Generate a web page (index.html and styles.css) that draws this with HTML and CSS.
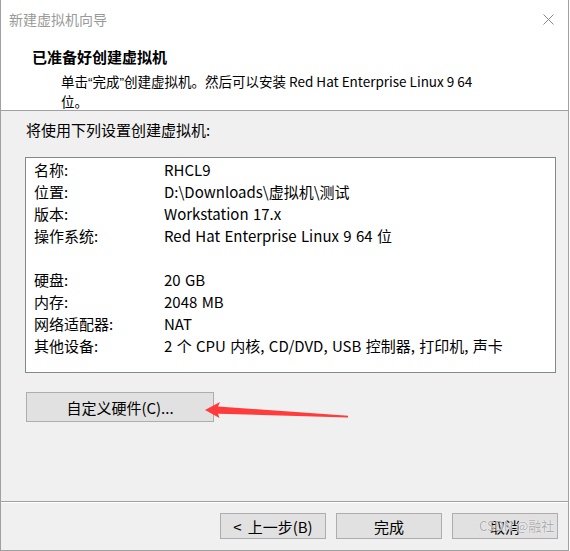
FILE: index.html
```html
<!DOCTYPE html>
<html lang="zh-CN">
<head>
<meta charset="utf-8">
<title>新建虚拟机向导</title>
<link rel="stylesheet" href="styles.css">
</head>
<body>
<div class="window">
  <div class="titlebar">
    <span class="title">新建虚拟机向导</span>
    <span class="close" aria-label="关闭">
      <svg width="11" height="11" viewBox="0 0 11 11"><path d="M0.5 0.5 L10.5 10.5 M10.5 0.5 L0.5 10.5" stroke="#8a8a8a" stroke-width="1" fill="none"/></svg>
    </span>
  </div>
  <div class="header">
    <div class="heading">已准备好创建虚拟机</div>
    <div class="subtitle">单击<span class="q">“</span>完成<span class="q">”</span>创建虚拟机。然后可以安装 Red Hat Enterprise Linux 9 64<br>位。</div>
  </div>
  <div class="body">
    <div class="intro">将使用下列设置创建虚拟机:</div>
    <div class="summary">
      <div class="row"><span class="k">名称:</span><span class="v">RHCL9</span></div>
      <div class="row"><span class="k">位置:</span><span class="v">D:\Downloads\虚拟机\测试</span></div>
      <div class="row"><span class="k">版本:</span><span class="v">Workstation 17.x</span></div>
      <div class="row"><span class="k">操作系统:</span><span class="v">Red Hat Enterprise Linux 9 64 位</span></div>
      <div class="row"><span class="k"></span><span class="v"></span></div>
      <div class="row"><span class="k">硬盘:</span><span class="v">20 GB</span></div>
      <div class="row"><span class="k">内存:</span><span class="v">2048 MB</span></div>
      <div class="row"><span class="k">网络适配器:</span><span class="v">NAT</span></div>
      <div class="row"><span class="k">其他设备:</span><span class="v">2 个 CPU 内核, CD/DVD, USB 控制器, 打印机, 声卡</span></div>
    </div>
    <button class="btn btn-custom">自定义硬件(C)...</button>
  </div>
  <div class="footer">
    <button class="btn btn-nav"><span class="lt">&lt;</span>上一步(B)</button>
    <button class="btn btn-nav">完成</button>
    <button class="btn btn-nav">取消</button>
  </div>
  <svg class="arrow" width="160" height="24" viewBox="200 400 160 24">
    <polygon points="204,410 219,402 217,406.5 347,415.8 347,417.4 217,413.8 218.5,418" fill="#ff3b3b"/>
  </svg>
  <div class="watermark">CSDN @融社</div>
</div>
</body>
</html>
```

FILE: styles.css
```css
* { box-sizing: border-box; }
html, body {
  margin: 0;
  padding: 0;
  background: #ffffff;
}
body {
  font-family: "Noto Sans CJK SC", "Noto Sans", sans-serif;
  font-size: 15px;
  color: #000;
}
.window {
  position: relative;
  width: 569px;
  height: 551px;
  border: 1px solid #a0a0a0;
  border-top: none;
  display: flex;
  flex-direction: column;
  background: #f0f0f0;
}
.titlebar {
  height: 40px;
  flex: none;
  background: #fff;
  display: flex;
  align-items: center;
  justify-content: space-between;
  padding: 0 14px 2px 8px;
}
.title {
  font-size: 14px;
  color: #999999;
}
.close {
  display: flex;
  width: 11px;
  height: 11px;
}
.header {
  background: #fff;
  height: 71px;
  flex: none;
  border-bottom: 1px solid #a0a0a0;
  padding: 8px 0 0 31px;
}
.heading {
  font-weight: bold;
  line-height: 18px;
}
.subtitle {
  font-size: 13.5px;
  line-height: 18px;
  margin-top: 6px;
  padding-left: 29px;
}
.q {
  font-family: "Liberation Sans", sans-serif;
}
.body {
  flex: 1;
  padding: 10px 0 0 24px;
}
.intro {
  line-height: 18px;
  padding-left: 1px;
}
.summary {
  margin-top: 18px;
  width: 531px;
  height: 216px;
  background: #fff;
  border: 1px solid #828790;
  padding: 1px 0 0 8px;
}
.row {
  display: flex;
  height: 22px;
  line-height: 22px;
  white-space: nowrap;
}
.k { width: 130px; flex: none; }
.v { flex: 1; word-spacing: 1px; }
.btn {
  font-family: inherit;
  font-size: 15px;
  color: #000;
  background: #e1e1e1;
  border: 1px solid #adadad;
  padding: 0;
  margin: 0;
}
.btn-custom {
  display: block;
  margin: 19px 0 0 1px;
  width: 188px;
  height: 30px;
}
.footer {
  flex: none;
  border-top: 1px solid #a0a0a0;
  box-shadow: inset 0 1px 0 #ffffff;
  height: 49px;
  display: flex;
  justify-content: flex-end;
  gap: 10px;
  padding: 11px 10px 0 0;
}
.btn-nav {
  width: 106px;
  height: 26px;
}
.lt {
  margin-right: 6px;
}
.arrow {
  position: absolute;
  left: 200px;
  top: 400px;
}
.watermark {
  position: absolute;
  left: 478px;
  top: 516px;
  font-size: 13px;
  color: rgba(135, 135, 135, 0.7);
  text-shadow: 0 0 1px #fff, 0 0 1px #fff;
  pointer-events: none;
}
```
